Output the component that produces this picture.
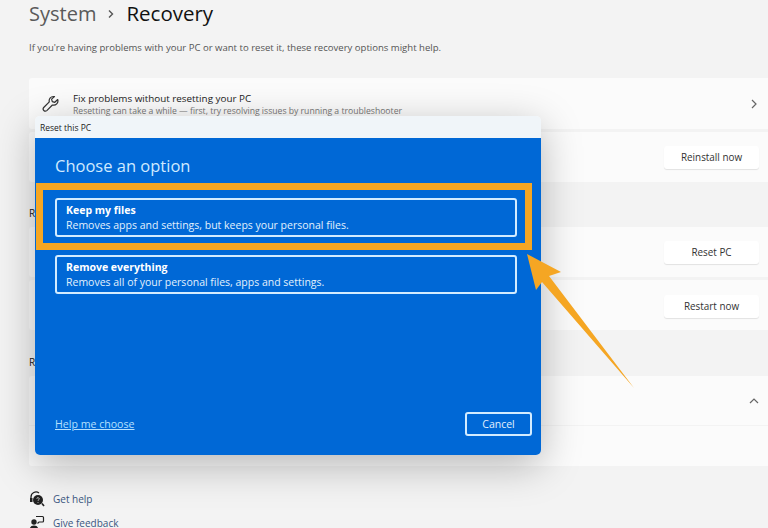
<div class="page">
	<header class="crumbs">
		<span class="parent">System</span>
		<svg class="sep" width="8" height="10" viewBox="0 0 8 10"><path d="M2 1.500 5.500 5 2 8.500" fill="none" stroke="#555" stroke-width="1.400" /></svg>
		<span class="current">Recovery</span>
	</header>
	<p class="intro">If you're having problems with your PC or want to reset it, these recovery options might help.</p>

	<section class="card fix">
		<svg class="wrench" width="18" height="18" viewBox="0 0 18 18">
			<path d="M11.500 1.500a4.300 4.300 0 0 0-4.200 5.400L1.700 12.500a2.200 2.200 0 0 0 3.100 3.100l5.600-5.600a4.300 4.300 0 0 0 5.300-5.500l-2.900 2.800-2.500-.7-.7-2.500 2.900-2.500a4.300 4.300 0 0 0-.5-.1z" fill="none" stroke="#333" stroke-width="1.200" stroke-linejoin="round" />
		</svg>
		<div class="fix-text">
			<div class="fix-title">Fix problems without resetting your PC</div>
			<div class="fix-sub">Resetting can take a while — first, try resolving issues by running a troubleshooter</div>
		</div>
		<svg class="chev" width="8" height="12" viewBox="0 0 8 12"><path d="M2 2 6 6 2 10" fill="none" stroke="#666" stroke-width="1.200" /></svg>
	</section>

	<section class="card action"><button class="btn">Reinstall now</button></section>

	<div class="label first">Recovery options</div>

	<section class="card action reset"><button class="btn">Reset PC</button></section>
	<section class="card action restart"><button class="btn">Restart now</button></section>

	<div class="label second">Related support</div>

	<section class="card support">
		<div class="support-head">
			<svg width="12" height="8" viewBox="0 0 12 8"><path d="M2 6 6 2l4 4" fill="none" stroke="#666" stroke-width="1.200" /></svg>
		</div>
	</section>

	<footer class="links">
		<div class="link">
			<svg width="16" height="16" viewBox="0 0 16 16">
				<path d="M2 8V6a5 5 0 0 1 8-4" fill="none" stroke="#222" stroke-width="1.300" />
				<circle cx="9" cy="9" r="5" fill="#222" />
				<path d="M13 12.500 15 15" stroke="#222" stroke-width="1.600" />
				<rect x="1" y="7" width="2.500" height="4" fill="#222" />
				<path d="M7.800 7.800a1.200 1.200 0 1 1 1.800 1.100c-.4.200-.6.400-.6.800M9 11v.8" fill="none" stroke="#ddd" stroke-width=".9" />
			</svg>
			<span>Get help</span>
		</div>
		<div class="link">
			<svg width="16" height="16" viewBox="0 0 16 16">
				<circle cx="5" cy="7" r="2.700" fill="#222" />
				<path d="M0.500 15c0-3 2-4.500 4.500-4.500S9.500 12 9.500 15z" fill="#222" />
				<path d="M7 1.500h6.500a1 1 0 0 1 1 1V6a1 1 0 0 1-1 1H10L8.500 8.500" fill="none" stroke="#222" stroke-width="1.200" />
			</svg>
			<span>Give feedback</span>
		</div>
	</footer>

	<div class="dialog">
		<div class="titlebar">Reset this PC</div>
		<div class="dialog-body">
			<h2>Choose an option</h2>
			<div class="options">
				<div class="option">
					<strong>Keep my files</strong>
					<span>Removes apps and settings, but keeps your personal files.</span>
				</div>
				<div class="option">
					<strong>Remove everything</strong>
					<span>Removes all of your personal files, apps and settings.</span>
				</div>
			</div>
			<div class="dialog-foot">
				<a href="#help">Help me choose</a>
				<button class="cancel">Cancel</button>
			</div>
		</div>
	</div>

	<div class="highlight"></div>
	<svg class="arrow" width="768" height="528" viewBox="0 0 768 528">
		<path d="M527 254 561 272 549 276 634 388 542 282 536 290z" fill="#f5a623" />
	</svg>
</div>

<style>
	:global(body) {
		background: #f3f3f3;
	}

	.page {
		position: relative;
		width: 768px;
		height: 528px;
		overflow: hidden;
		box-sizing: border-box;
		padding-left: 29px;
		font-family: 'Open Sans', 'Noto Sans', sans-serif;
		background: #f3f3f3;
		color: #1b1b1b;
	}

	.crumbs {
		display: flex;
		align-items: center;
		height: 27px;
		font-size: 20px;
		line-height: 27px;
	}

	.parent {
		color: #5a5a5a;
	}

	.sep {
		margin: 0 11px;
	}

	.current {
		color: #111;
		font-size: 20.500px;
		font-weight: 500;
	}

	.intro {
		margin: 14px 0 0;
		font-size: 9.550px;
		line-height: 14px;
		color: #555;
		height: 37px;
	}

	.card {
		background: #fbfbfb;
		border-radius: 3px 0 0 3px;
		box-sizing: border-box;
	}

	.fix {
		display: flex;
		align-items: center;
		height: 51px;
		margin-bottom: 3px;
		padding: 0 10px 0 13px;
	}

	.wrench {
		margin-right: 13px;
	}

	.fix-text {
		flex: 1;
	}

	.fix-title {
		font-size: 9.850px;
		line-height: 14px;
		color: #222;
	}

	.fix-sub {
		font-size: 8.650px;
		line-height: 12px;
		color: #777;
	}

	.action {
		display: flex;
		align-items: center;
		justify-content: flex-end;
		height: 50px;
		padding-right: 9px;
	}

	.restart {
		padding-top: 2px;
	}

	.btn {
		width: 95px;
		height: 23px;
		padding: 0;
		background: #fff;
		border: 0;
		border-radius: 3px;
		box-shadow: 0 1px 1px rgba(0, 0, 0, 0.1);
		font: 9.900px 'Open Sans', sans-serif;
		color: #333;
	}

	.label {
		font-size: 10px;
		line-height: 14px;
		color: #222;
		height: 14px;
	}

	.label.first {
		padding: 24px 0 7px;
	}

	.reset {
		margin-bottom: 3px;
	}

	.label.second {
		padding: 25px 0 7px;
	}

	.support {
		height: 90px;
		margin-bottom: 25px;
	}

	.support-head {
		display: flex;
		align-items: center;
		justify-content: flex-end;
		height: 49px;
		padding-right: 8px;
		border-bottom: 1px solid #f3f3f3;
	}

	.links {
		display: flex;
		flex-direction: column;
		gap: 8px;
	}

	.link {
		display: flex;
		align-items: center;
		gap: 8px;
		height: 16px;
		font-size: 10px;
		color: #3a5680;
	}

	.dialog {
		position: absolute;
		left: 35px;
		top: 116px;
		width: 506px;
		height: 339px;
		border-radius: 5px;
		overflow: hidden;
		display: flex;
		flex-direction: column;
		box-shadow: 0 10px 40px rgba(0, 0, 0, 0.28);
	}

	.titlebar {
		height: 22px;
		flex: none;
		box-sizing: border-box;
		padding: 5px 0 0 5px;
		background: #f0f5f9;
		font-size: 8.500px;
		line-height: 13px;
		color: #222;
	}

	.dialog-body {
		flex: 1;
		display: flex;
		flex-direction: column;
		background: #0068d6;
		padding: 15px 9px 19px 20px;
		color: #fff;
	}

	h2 {
		margin: 0 0 19px;
		font-size: 16.500px;
		line-height: 26px;
		font-weight: 400;
		color: #cfeaff;
	}

	.options {
		display: flex;
		flex-direction: column;
		gap: 18px;
		margin-right: 15px;
		flex: 1;
	}

	.option {
		display: flex;
		flex-direction: column;
		justify-content: center;
		height: 39px;
		box-sizing: border-box;
		padding: 1px 0 0 9px;
		border: 2px solid #d3ecff;
		border-radius: 3px;
		font-size: 10.500px;
		line-height: 15px;
	}

	.option strong {
		font-weight: 700;
	}

	.option span {
		color: #e2f1fd;
	}

	.dialog-foot {
		display: flex;
		align-items: center;
		justify-content: space-between;
	}

	.dialog-foot a {
		color: #b4e0ff;
		font-size: 10.600px;
	}

	.cancel {
		width: 67px;
		height: 24px;
		padding: 0;
		background: transparent;
		border: 2px solid #d3ecff;
		border-radius: 3px;
		color: #e2f1fd;
		font: 10.500px 'Open Sans', sans-serif;
	}

	.highlight {
		position: absolute;
		left: 36px;
		top: 183px;
		width: 496px;
		height: 67px;
		box-sizing: border-box;
		border: 7.500px solid #f5a623;
	}

	.arrow {
		position: absolute;
		left: 0;
		top: 0;
		pointer-events: none;
	}
</style>
